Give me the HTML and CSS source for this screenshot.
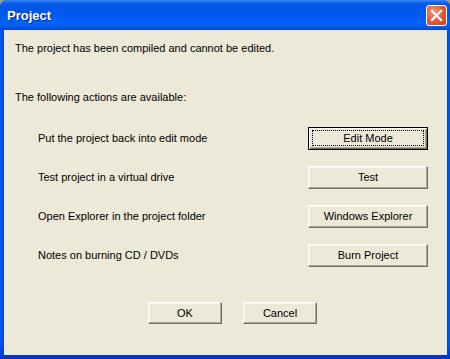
FILE: index.html
```html
<!DOCTYPE html>
<html>
<head>
<meta charset="utf-8">
<title>Project</title>
<link rel="stylesheet" href="styles.css">
</head>
<body>
<div class="window">
  <div class="titlebar">
    <span class="title">Project</span>
    <span class="close" aria-label="Close">
      <svg width="13" height="13" viewBox="0 0 13 13"><path d="M2 2 L11 11 M11 2 L2 11" stroke="#fff" stroke-width="2.2" stroke-linecap="square"/></svg>
    </span>
  </div>
  <div class="client">
    <p class="msg">The project has been compiled and cannot be edited.</p>
    <p class="msg msg2">The following actions are available:</p>
    <div class="actions">
      <div class="row"><span class="label">Put the project back into edit mode</span><button class="btn default"><span class="focus">Edit Mode</span></button></div>
      <div class="row"><span class="label">Test project in a virtual drive</span><button class="btn">Test</button></div>
      <div class="row"><span class="label">Open Explorer in the project folder</span><button class="btn">Windows Explorer</button></div>
      <div class="row"><span class="label">Notes on burning CD / DVDs</span><button class="btn">Burn Project</button></div>
    </div>
    <div class="footer">
      <button class="btn small">OK</button>
      <button class="btn small">Cancel</button>
    </div>
  </div>
</div>
</body>
</html>
```
FILE: styles.css
```css
html, body {
  margin: 0;
  padding: 0;
  background: #9a9a9a;
}
body {
  width: 450px;
  height: 359px;
  overflow: hidden;
  font-family: "Liberation Sans", Arial, sans-serif;
}
.window {
  width: 450px;
  height: 359px;
  box-sizing: border-box;
  display: flex;
  flex-direction: column;
  border-radius: 7px 7px 0 0;
  overflow: hidden;
  background: linear-gradient(to bottom, #0055e5 0, #0055e5 96%, #0032c4 100%);
}
.titlebar {
  height: 30px;
  flex: none;
  box-sizing: border-box;
  display: flex;
  align-items: center;
  justify-content: space-between;
  padding: 0 3px 0 7px;
  background: linear-gradient(to bottom, #3d8ef5 0px, #2a7af2 1px, #0a5ee9 3px, #0056e6 6px, #0058ee 14px, #005ff6 20px, #0063f9 24px, #005ae8 27px, #004bd8 29px, #0043cf 30px);
}
.title {
  color: #fff;
  font-weight: bold;
  font-size: 13px;
  text-shadow: 1px 1px 0 #0a1f8f;
  padding-top: 1px;
}
.close {
  width: 21px;
  height: 21px;
  box-sizing: border-box;
  border: 1px solid #fff;
  border-radius: 3px;
  display: flex;
  align-items: center;
  justify-content: center;
  background: radial-gradient(circle at 35% 30%, #f19a7c 0, #e5603e 45%, #cf3e18 100%);
  margin-top: 1px;
}
.close svg {
  display: block;
}
.client {
  flex: 1;
  background: #ece9d8;
  margin: 0 3px 3px 4px;
  box-shadow: -1px 0 0 #0046d6, 1px 0 0 #0046d6;
  font-size: 11px;
  color: #000;
  display: flex;
  flex-direction: column;
  border-bottom: 1px solid #003cc0;
}
.msg {
  margin: 0;
  padding: 12px 0 0 11px;
  line-height: 13px;
}
.msg2 {
  padding-top: 36px;
}
.actions {
  display: flex;
  flex-direction: column;
  gap: 16px;
  padding: 23px 0 0 34px;
}
.row {
  display: flex;
  align-items: center;
  justify-content: space-between;
  padding-right: 19px;
}
.label {
  line-height: 13px;
}
.btn {
  box-sizing: border-box;
  width: 120px;
  height: 23px;
  margin: 0;
  padding: 0;
  font-family: "Liberation Sans", Arial, sans-serif;
  font-size: 11px;
  color: #000;
  background: #ece9d8;
  border: 1px solid;
  border-color: #ffffff #716f64 #716f64 #ffffff;
  box-shadow: inset -1px -1px 0 #aca899, inset 1px 1px 0 #f5f4ea;
  display: flex;
  align-items: center;
  justify-content: center;
  line-height: 13px;
}
.btn.default {
  border: 1px solid #000;
  box-shadow: inset 1px 1px 0 #ffffff, inset -1px -1px 0 #716f64, inset -2px -2px 0 #aca899;
  padding: 2px 3px 3px 3px;
}
.focus {
  flex: 1;
  align-self: stretch;
  display: flex;
  align-items: center;
  justify-content: center;
  border: 1px dotted #000;
}
.footer {
  display: flex;
  gap: 21px;
  padding: 35px 0 0 144px;
}
.btn.small {
  width: 74px;
  height: 22px;
}
```
